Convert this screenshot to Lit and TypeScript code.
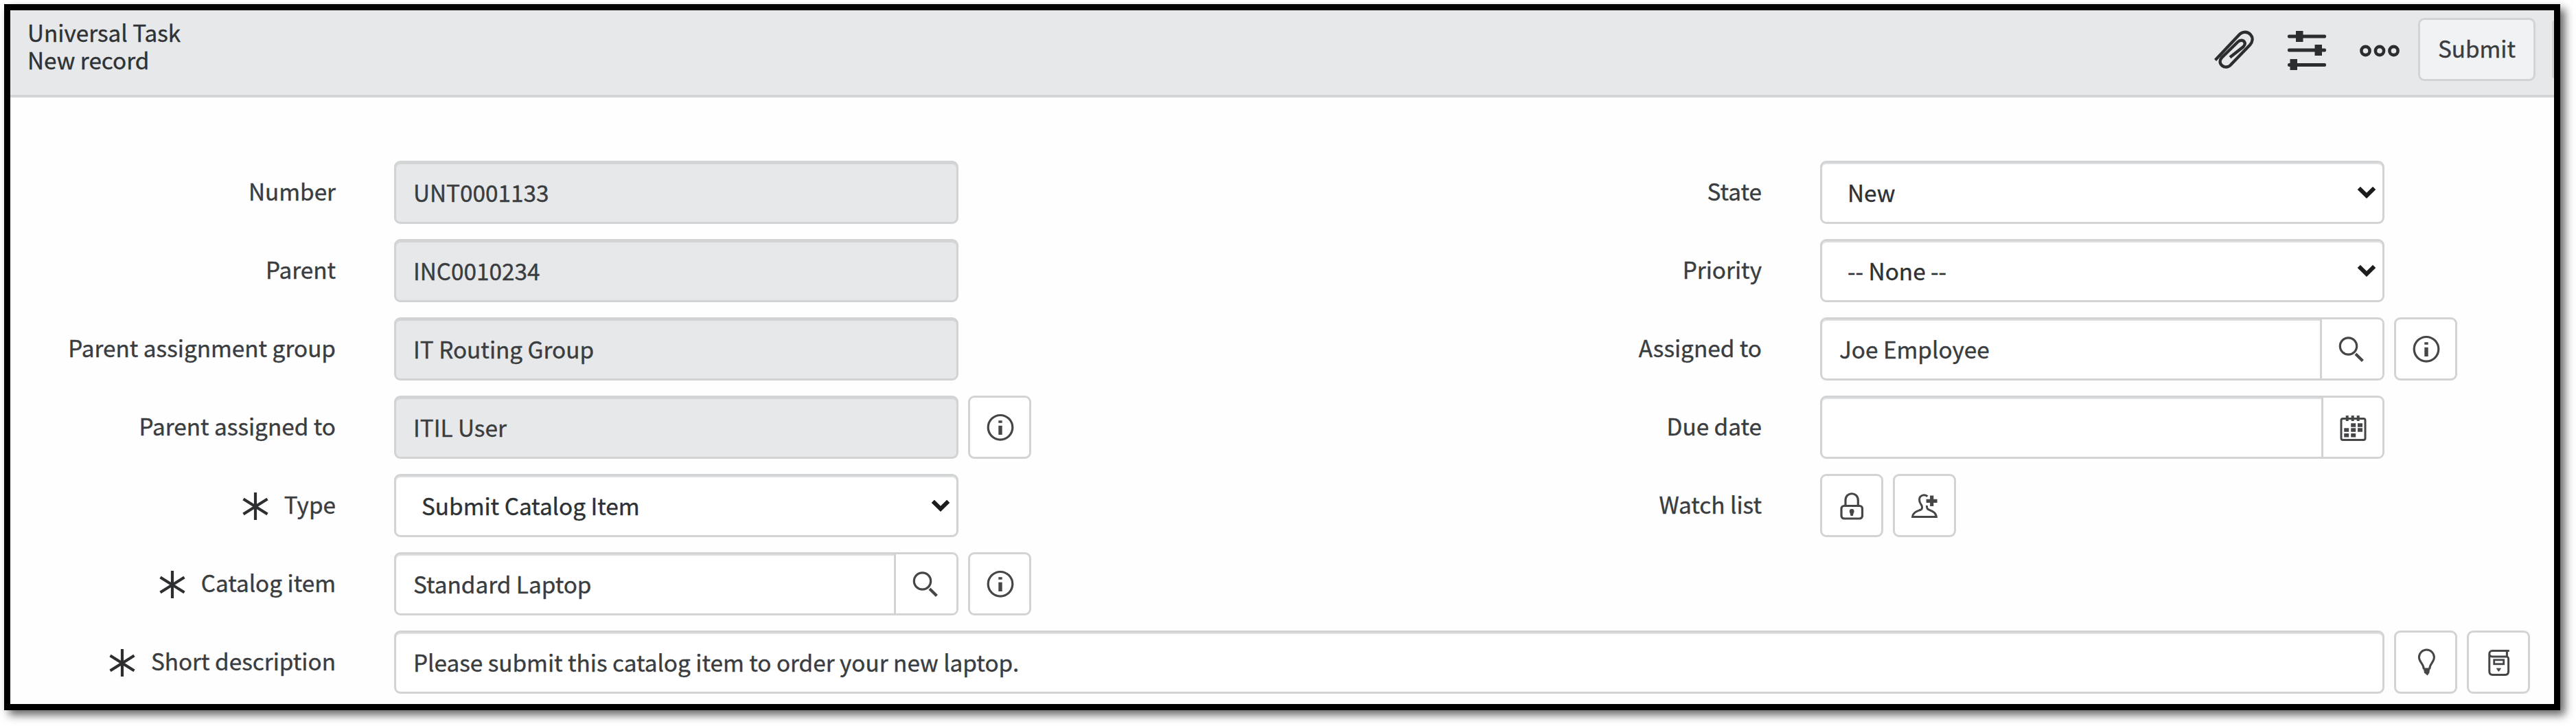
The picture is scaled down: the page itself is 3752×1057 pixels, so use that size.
import { LitElement, html, svg, css, nothing, TemplateResult, SVGTemplateResult } from "lit";
import { customElement, property } from "lit/decorators.js";
import { classMap } from "lit/directives/class-map.js";

type IconName = "info" | "search" | "calendar" | "lock" | "addUser" | "bulb" | "book" | "chevron" | "asterisk";

const ICONS: Record<IconName, SVGTemplateResult> = {
  info: svg`
    <circle cx="1" cy="0.3" r="17.8" stroke-width="3.2" />
    <path d="M1 -9.8V-6.2M1 -2.2V11" stroke-width="5.4" />`,
  search: svg`
    <circle cx="-5.5" cy="-4" r="12.2" stroke-width="3.2" />
    <path d="M5 7.2L15.4 17.6" stroke-width="4.2" />`,
  calendar: svg`
    <rect x="-17" y="-12.5" width="35" height="31" rx="2.5" stroke-width="3" />
    <path d="M-8.3 -17V-9M-0.3 -17V-9M7.7 -17V-9" stroke-width="4" />
    <path d="M-2.8 -3h7M7 -3h7M-12.8 4h7M-2.8 4h7M7 4h7M-12.8 11.7h7M-2.8 11.7h7" stroke-width="5.6" />`,
  lock: svg`
    <rect x="-15" y="0.5" width="30.5" height="18.5" rx="4" stroke-width="3.2" />
    <path d="M-9 0V-7.5C-9 -20.5 9.3 -20.5 9.3 -7.5V0" stroke-width="3.2" />
    <path d="M0.2 5a3.4 3.4 0 0 1 3.4 3.4c0 2-1.4 2.8-1.6 6.6h-3.6c-.2-3.8-1.6-4.6-1.6-6.6a3.4 3.4 0 0 1 3.4-3.4z" fill="currentColor" stroke="none" />`,
  addUser: svg`
    <path d="M4.5 -13.2C1 -17 -7.4 -15.6 -7.4 -8.5C-7.4 -3.5 -5.2 -2.4 -4 0C-3 3.5 -3 5.4 -5.5 6.2C-11.5 8.2 -17 10.5 -17.4 16.6H17.4C16.8 10.5 12 8.4 6.5 6.2C3.8 5 3.2 3.6 3.6 0" stroke-width="3" />
    <path d="M2.6 -6.6H18.6M10.7 -14.6V1" stroke-width="5.2" />`,
  bulb: svg`
    <path d="M-2.6 10.5C-2.6 2 -9.6 0.5 -9.6 -7A10.9 10.9 0 0 1 12.4 -7C12.4 0.5 5.6 2 5.6 10.5" stroke-width="3" />
    <path d="M-3.4 8.5L6.2 8.5L5.4 15.5L2.6 19.4L-2 15.5Z" fill="currentColor" stroke="none" />`,
  book: svg`
    <path d="M15.8 -16.4H-9C-14.6 -16.4 -14.6 -8 -9 -8H11.6C14.6 -8 14.6 -6 14.6 -4V13.5C14.6 17 13 18.4 10 18.4H-8.5C-11.5 18.4 -13.2 17 -13.2 13.5V-12M12.4 -16V-8" stroke-width="3" />
    <rect x="-6.3" y="-3.2" width="14" height="6" stroke-width="2.8" />
    <path d="M-2.6 9.2h6L0.4 13.4z" fill="currentColor" stroke-width="1" />`,
  chevron: svg`<path d="M-11.2 -7.2L0 3.8L11.2 -7.2" stroke-width="6" stroke="#1c1c1c" />`,
  asterisk: svg`<path d="M0 -20V20M-17.5 -10.5L17.5 11.5M17.5 -10.5L-17.5 11.5" stroke-width="4.2" />`,
};

const icon = (name: IconName, cls = "icon"): TemplateResult => html`
  <svg class=${cls} viewBox="-24 -24 48 48" fill="none" stroke="currentColor">${ICONS[name]}</svg>
`;

interface Field {
  label: string;
  value?: string;
  kind: "readonly" | "text" | "select" | "reference" | "date" | "list";
  required?: boolean;
  wide?: boolean;
  actions?: IconName[];
}

const LEFT: Field[] = [
  { label: "Number", value: "UNT0001133", kind: "readonly" },
  { label: "Parent", value: "INC0010234", kind: "readonly" },
  { label: "Parent assignment group", value: "IT Routing Group", kind: "readonly" },
  { label: "Parent assigned to", value: "ITIL User", kind: "readonly", actions: ["info"] },
  { label: "Type", value: "Submit Catalog Item", kind: "select", required: true },
  { label: "Catalog item", value: "Standard Laptop", kind: "reference", required: true, actions: ["info"] },
];

const RIGHT: Field[] = [
  { label: "State", value: "New", kind: "select" },
  { label: "Priority", value: "-- None --", kind: "select" },
  { label: "Assigned to", value: "Joe Employee", kind: "reference", actions: ["info"] },
  { label: "Due date", value: "", kind: "date" },
  { label: "Watch list", kind: "list", actions: ["lock", "addUser"] },
];

const SUMMARY: Field = {
  label: "Short description",
  value: "Please submit this catalog item to order your new laptop.",
  kind: "text",
  required: true,
  wide: true,
  actions: ["bulb", "book"],
};

@customElement("form-field")
class FormField extends LitElement {
  @property({ attribute: false }) field!: Field;

  static styles = css`
    :host {
      display: flex;
      height: 92px;
      color: #3a3d3f;
    }
    .label {
      box-sizing: border-box;
      width: 474px;
      margin-right: 85px;
      padding-bottom: 5px;
      display: flex;
      align-items: center;
      justify-content: flex-end;
      gap: 24px;
      white-space: nowrap;
      flex: none;
    }
    .mark {
      width: 48px;
      height: 48px;
      margin: 6px -6px 0;
      color: #2c2e30;
    }
    .control {
      box-sizing: border-box;
      width: 822px;
      flex: none;
      display: flex;
      border: 3px solid #d2d3d4;
      border-radius: 9px;
      background: #fff;
      margin-right: 14px;
      overflow: hidden;
      box-shadow: inset 0 2px 1px #dddedf;
    }
    .control.wide {
      width: 2899px;
    }
    .control.readonly {
      background: #e7e8ea;
      box-shadow: inset 0 2px 1px #d2d3d4;
    }
    .value {
      flex: 1;
      display: flex;
      align-items: center;
      padding-left: 25px;
      white-space: nowrap;
    }
    .select .value {
      padding-left: 37px;
      color: #2e3133;
    }
    .chevron {
      width: 48px;
      height: 48px;
      margin: 20px -1px 0 0;
    }
    .addon {
      width: 88px;
      display: flex;
      align-items: center;
      justify-content: center;
      border-left: 3px solid #d2d3d4;
      background: #fff;
    }
    .date .addon {
      width: 86px;
    }
    .icon {
      width: 48px;
      height: 48px;
      color: #444648;
    }
    .actions {
      display: flex;
      gap: 14px;
    }
    .btn {
      box-sizing: border-box;
      width: 92px;
      height: 92px;
      display: flex;
      align-items: center;
      justify-content: center;
      border: 3px solid #d2d3d4;
      border-radius: 9px;
      background: #fff;
    }
  `;

  render() {
    const f = this.field;
    return html`
      <div class="label">${f.required ? icon("asterisk", "mark") : nothing}<span>${f.label}</span></div>
      ${f.kind === "list"
        ? nothing
        : html`<div class=${classMap({ control: true, [f.kind]: true, wide: !!f.wide })}>
            <div class="value">${f.value}</div>
            ${f.kind === "select" ? icon("chevron", "chevron") : nothing}
            ${f.kind === "reference" ? html`<div class="addon">${icon("search")}</div>` : nothing}
            ${f.kind === "date" ? html`<div class="addon">${icon("calendar")}</div>` : nothing}
          </div>`}
      <div class="actions">${(f.actions ?? []).map((a) => html`<div class="btn">${icon(a)}</div>`)}</div>
    `;
  }
}

@customElement("app-root")
class AppRoot extends LitElement {
  static styles = css`
    :host {
      display: block;
      box-sizing: border-box;
      width: 3752px;
      height: 1057px;
      padding: 6px;
      overflow: hidden;
      background: #fff;
      font-family: "Noto Sans CJK SC", "Noto Sans", sans-serif;
      font-size: 33.3px;
      line-height: 40px;
      color: #2f3234;
      -webkit-text-stroke-width: 0.4px;
    }
    .frame {
      box-sizing: border-box;
      width: 3723px;
      height: 1028px;
      border: 9px solid #000;
      background: #fefefe;
      box-shadow: 7px 7px 12px rgba(0, 0, 0, 0.6);
    }
    .header {
      box-sizing: border-box;
      height: 127px;
      display: flex;
      justify-content: space-between;
      background: #e7e8ea;
      border-bottom: 4px solid #d4d5d6;
      overflow: hidden;
    }
    .titles {
      padding: 12px 0 0 25px;
    }
    .tools {
      height: 92px;
      margin-top: 11px;
      display: flex;
      align-items: center;
      color: #2b2d2f;
    }
    .clip {
      width: 58px;
      height: 56px;
      margin-right: 48px;
    }
    .sliders {
      width: 58px;
      height: 60px;
      margin: 4px 47px 0 0;
    }
    .dots {
      width: 60px;
      height: 20px;
      margin: 3px 26px 0 0;
    }
    .submit {
      box-sizing: border-box;
      width: 171px;
      height: 92px;
      display: flex;
      align-items: center;
      justify-content: center;
      padding-bottom: 5px;
      border: 3px solid #d2d3d4;
      border-radius: 9px;
      background: #f1f2f4;
      color: #3a3d3f;
      margin-right: 24px;
    }
    .next {
      width: 3px;
      height: 84px;
      border-radius: 3px 0 0 3px;
      background: #d2d3d4;
    }
    .form {
      padding-top: 92px;
    }
    .columns {
      display: grid;
      grid-template-columns: 2077px 1fr;
      margin-bottom: 22px;
    }
    .column {
      display: flex;
      flex-direction: column;
      gap: 22px;
    }
  `;

  render() {
    const rows = (fields: Field[]) => fields.map((f) => html`<form-field .field=${f}></form-field>`);
    return html`
      <div class="frame">
        <div class="header">
          <div class="titles">
            <div>Universal Task</div>
            <div>New record</div>
          </div>
          <div class="tools">
            <svg class="clip" viewBox="0 0 58 56" fill="none" stroke="currentColor" stroke-width="4.4">
              <path d="M1.5 43.5L35.5 7.5C41 1 49 1.5 53 6.5C57 11 56 17 52 21.5L24.5 50C21 54.5 15 54.5 11.5 51.5C7.5 48 8 43.5 11 40L34.5 17C37.5 14 42 14 44 17C45.5 19.5 44.5 22 42.5 24L23 39.5" />
            </svg>
            <svg class="sliders" viewBox="0 0 58 60" fill="currentColor">
              <rect x="1" y="6.5" width="56" height="5" rx="2" /><rect x="13" y="1" width="10.5" height="16" />
              <rect x="1" y="26.5" width="56" height="5" rx="2" /><rect x="40.5" y="21" width="10.5" height="16" />
              <rect x="1" y="48" width="56" height="5" rx="2" /><rect x="4.5" y="42" width="10.5" height="16" />
            </svg>
            <svg class="dots" viewBox="0 0 60 20" fill="none" stroke="currentColor" stroke-width="4.6">
              <circle cx="9.5" cy="10" r="6.1" /><circle cx="30" cy="10" r="6.1" /><circle cx="50.5" cy="10" r="6.1" />
            </svg>
            <div class="submit">Submit</div>
            <div class="next"></div>
          </div>
        </div>
        <div class="form">
          <div class="columns">
            <div class="column">${rows(LEFT)}</div>
            <div class="column">${rows(RIGHT)}</div>
          </div>
          ${rows([SUMMARY])}
        </div>
      </div>
    `;
  }
}
